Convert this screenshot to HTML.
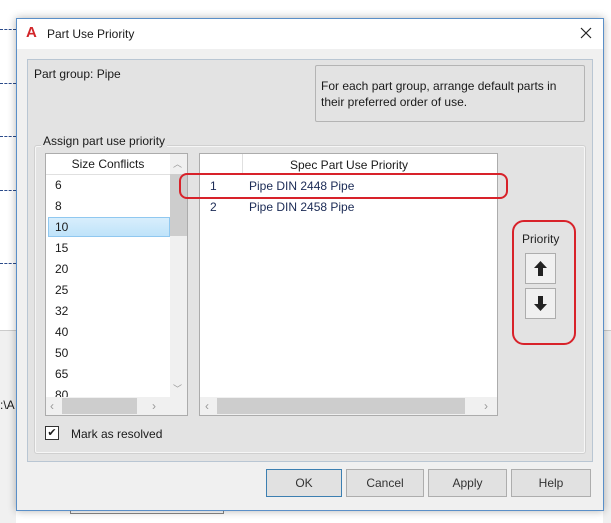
<html><head><style>
body{margin:0;width:611px;height:522px;background:#fff;position:relative;overflow:hidden;font-family:"Liberation Sans",sans-serif;font-size:12px;color:#1a1a1a}
.a{position:absolute}
.dash{position:absolute;left:0;width:16px;border-top:1px dashed #2a4a8a}
.btn{position:absolute;top:469px;height:28px;background:#e1e1e1;border:1px solid #adadad;box-sizing:border-box;text-align:center;line-height:27px;color:#333}
.row{position:absolute;left:10px;font-size:12px}
</style></head><body>
<div class="dash" style="top:29px"></div><div class="dash" style="top:83px"></div><div class="dash" style="top:136px"></div><div class="dash" style="top:190px"></div><div class="dash" style="top:263px"></div>
<div class="a" style="left:0;top:330px;width:16px;height:192px;background:#f0f0f0;border-top:1px solid #ccc"></div>
<div class="a" style="left:0;top:398px;font-size:12px">:\A</div>
<div class="a" style="left:603px;top:330px;width:8px;height:192px;background:#f0f0f0;border-top:1px solid #ccc"></div>
<div class="a" style="left:70px;top:510px;width:152px;height:2px;border:1px solid #888"></div>
<div class="a" style="left:16px;top:18px;width:586px;height:491px;background:#f0f0f0;border:1px solid #5a8fc8;box-shadow:0 0 8px rgba(0,0,0,.3)">
 <div class="a" style="left:0;top:0;width:586px;height:30px;background:#fff"></div>
 <div class="a" style="left:9px;top:5px;color:#d2262a;font-weight:bold;font-size:15px">A</div>
 <div class="a" style="left:30px;top:8px;font-size:12px">Part Use Priority</div>
 <svg class="a" style="left:563px;top:8px" width="12" height="12"><path d="M1 1L11 11M11 1L1 11" stroke="#222" stroke-width="1.2"/></svg>
 <div class="a" style="left:10px;top:40px;width:564px;height:401px;background:#e3e3e3;border:1px solid #b9c6d3"></div>
 <div class="a" style="left:17px;top:48px">Part group: Pipe</div>
 <div class="a" style="left:298px;top:46px;width:268px;height:55px;background:#e3e3e3;border:1px solid #b4b4b4;border-radius:2px"></div>
 <div class="a" style="left:304px;top:59px;line-height:16px">For each part group, arrange default parts in<br>their preferred order of use.</div>
 <div class="a" style="left:18px;top:127px;width:548px;height:305px;border:1px solid #f6f6f6;border-radius:2px;outline:1px solid #d0d0d0"></div>
 <div class="a" style="left:24px;top:115px;background:#e3e3e3;padding:0 2px">Assign part use priority</div>
 <div class="a" style="left:28px;top:134px;width:141px;height:261px;background:#fff;border:1px solid #acacac;overflow:hidden">
  <div class="a" style="left:0;top:0;width:124px;height:20px;border-bottom:1px solid #e0e0e0;text-align:center;line-height:20px">Size Conflicts</div>
  <div class="a" style="left:124px;top:0;width:17px;height:243px;background:#f0f0f0"></div>
  <div class="a" style="left:124px;top:20px;width:17px;height:62px;background:#cdcdcd"></div>
  <div class="a" style="left:127px;top:3px;color:#999;font-size:9px">︿</div>
  <div class="a" style="left:127px;top:228px;color:#999;font-size:9px">﹀</div>
  <div class="a" style="left:2px;top:63px;width:122px;height:20px;background:linear-gradient(#d8eefc,#bfe3fa);border:1px solid #90c8f0;box-sizing:border-box"></div>
  <div class="row" style="left:9px;top:24px">6</div><div class="row" style="left:9px;top:45px">8</div><div class="row" style="left:9px;top:66px">10</div><div class="row" style="left:9px;top:87px">15</div><div class="row" style="left:9px;top:108px">20</div><div class="row" style="left:9px;top:129px">25</div><div class="row" style="left:9px;top:150px">32</div><div class="row" style="left:9px;top:171px">40</div><div class="row" style="left:9px;top:192px">50</div><div class="row" style="left:9px;top:213px">65</div><div class="row" style="left:9px;top:234px">80</div>
  <div class="a" style="left:0;top:243px;width:141px;height:18px;background:#f0f0f0"></div>
  <div class="a" style="left:16px;top:244px;width:75px;height:16px;background:#cdcdcd"></div>
  <div class="a" style="left:4px;top:245px;color:#999">‹</div><div class="a" style="left:106px;top:245px;color:#999">›</div>
 </div>
 <div class="a" style="left:182px;top:134px;width:297px;height:261px;background:#fff;border:1px solid #acacac;overflow:hidden">
  <div class="a" style="left:42px;top:0;width:1px;height:20px;background:#e0e0e0"></div>
  <div class="a" style="left:90px;top:4px">Spec Part Use Priority</div>
  <div class="a" style="left:10px;top:25px;color:#1a2a55">1</div><div class="a" style="left:49px;top:25px;color:#1a2a55">Pipe DIN 2448 Pipe</div>
  <div class="a" style="left:10px;top:46px;color:#1a2a55">2</div><div class="a" style="left:49px;top:46px;color:#1a2a55">Pipe DIN 2458 Pipe</div>
  <div class="a" style="left:0;top:243px;width:297px;height:18px;background:#f0f0f0"></div>
  <div class="a" style="left:17px;top:244px;width:248px;height:16px;background:#cdcdcd"></div>
  <div class="a" style="left:5px;top:245px;color:#999">‹</div><div class="a" style="left:284px;top:245px;color:#999">›</div>
 </div>
 <div class="a" style="left:162px;top:154px;width:325px;height:22px;border:2px solid #d8222a;border-radius:8px"></div>
 <div class="a" style="left:505px;top:213px;color:#222">Priority</div>
 <div class="a" style="left:508px;top:234px;width:29px;height:29px;background:#f0f0f0;border:1px solid #adadad">
  <svg width="29" height="29"><path d="M14.5 7L21 14H17V22H12V14H8Z" fill="#222"/></svg></div>
 <div class="a" style="left:508px;top:269px;width:29px;height:29px;background:#f0f0f0;border:1px solid #adadad">
  <svg width="29" height="29"><path d="M14.5 22L21 15H17V7H12V15H8Z" fill="#222"/></svg></div>
 <div class="a" style="left:495px;top:201px;width:60px;height:121px;border:2px solid #d8222a;border-radius:12px"></div>
 <div class="a" style="left:28px;top:407px;width:12px;height:12px;background:#fff;border:1px solid #333;font-size:11px;line-height:12px;text-align:center">✔</div>
 <div class="a" style="left:54px;top:408px">Mark as resolved</div>
</div>
<div class="btn" style="left:266px;width:76px;border-color:#3c7fb1">OK</div>
<div class="btn" style="left:346px;width:78px">Cancel</div>
<div class="btn" style="left:428px;width:79px">Apply</div>
<div class="btn" style="left:511px;width:80px">Help</div>
</body></html>
